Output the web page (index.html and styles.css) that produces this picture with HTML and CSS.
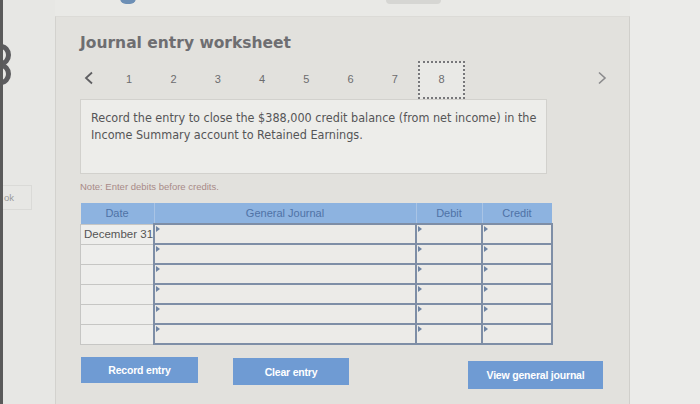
FILE: index.html
```html
<!DOCTYPE html>
<html>
<head>
<meta charset="utf-8">
<link rel="stylesheet" href="styles.css">
</head>
<body>
<div class="page">
  <div class="left">
    <div class="left-glyph"><span class="ring"></span><span class="ring"></span></div>
    <div class="left-box">ok</div>
  </div>
  <div class="center">
    <div class="topbar">
      <span class="dot"></span>
      <span class="pill"></span>
    </div>
    <div class="panel">
      <h1 class="title">Journal entry worksheet</h1>
      <div class="nav">
        <span class="chev prev"><svg width="10" height="14" viewBox="0 0 10 14"><polyline points="8,1.5 2,7 8,12.5" fill="none" stroke="#5f5f62" stroke-width="1.8"/></svg></span>
        <span class="step">1</span>
        <span class="step">2</span>
        <span class="step">3</span>
        <span class="step">4</span>
        <span class="step">5</span>
        <span class="step">6</span>
        <span class="step">7</span>
        <span class="step current">8</span>
        <span class="chev next"><svg width="10" height="14" viewBox="0 0 10 14"><polyline points="2,1.5 8,7 2,12.5" fill="none" stroke="#8a8a8c" stroke-width="1.6"/></svg></span>
      </div>
      <div class="prompt">Record the entry to close the $388,000 credit balance (from net income) in the Income Summary account to Retained Earnings.</div>
      <div class="note">Note: Enter debits before credits.</div>
      <table class="journal">
        <thead>
          <tr><th class="c-date">Date</th><th class="c-gj">General Journal</th><th class="c-dr">Debit</th><th class="c-cr">Credit</th></tr>
        </thead>
        <tbody>
          <tr><td class="date">December 31</td><td class="inp"><i class="tri"></i></td><td class="inp"><i class="tri"></i></td><td class="inp"><i class="tri"></i></td></tr>
          <tr><td class="date"></td><td class="inp"><i class="tri"></i></td><td class="inp"><i class="tri"></i></td><td class="inp"><i class="tri"></i></td></tr>
          <tr><td class="date"></td><td class="inp"><i class="tri"></i></td><td class="inp"><i class="tri"></i></td><td class="inp"><i class="tri"></i></td></tr>
          <tr><td class="date"></td><td class="inp"><i class="tri"></i></td><td class="inp"><i class="tri"></i></td><td class="inp"><i class="tri"></i></td></tr>
          <tr><td class="date"></td><td class="inp"><i class="tri"></i></td><td class="inp"><i class="tri"></i></td><td class="inp"><i class="tri"></i></td></tr>
          <tr><td class="date"></td><td class="inp"><i class="tri"></i></td><td class="inp"><i class="tri"></i></td><td class="inp"><i class="tri"></i></td></tr>
        </tbody>
      </table>
      <div class="actions">
        <button class="btn b-record">Record entry</button>
        <button class="btn b-clear">Clear entry</button>
        <button class="btn b-view">View general journal</button>
      </div>
    </div>
  </div>
  <div class="right"></div>
</div>
</body>
</html>
```

FILE: styles.css
```css
html, body {
  margin: 0;
  padding: 0;
  background: #e8e8e5;
}
.page {
  display: flex;
  width: 700px;
  height: 404px;
  overflow: hidden;
  font-family: "Liberation Sans", Arial, sans-serif;
}
.left {
  width: 52px;
  flex: none;
  background: #e7e7e4;
  border-left: 3px solid #5a5a5a;
  overflow: hidden;
  display: flex;
  flex-direction: column;
}
.left-glyph {
  margin-top: 44px;
  margin-left: -12px;
  display: flex;
  flex-direction: column;
}
.ring {
  width: 10px;
  height: 12px;
  border: 5px solid #5c5c5e;
  border-radius: 50%;
  margin-bottom: -3px;
}
.left-box {
  margin-top: 103px;
  width: 27px;
  height: 23px;
  border: 1px solid #dadad7;
  border-left: none;
  font-size: 9.5px;
  line-height: 23px;
  color: #9a9a9a;
  padding-left: 1px;
}
.center {
  width: 575px;
  flex: none;
  display: flex;
  flex-direction: column;
}
.topbar {
  height: 16px;
  flex: none;
  background: #e9e9e6;
  display: flex;
  align-items: flex-start;
}
.dot {
  width: 16px;
  height: 6px;
  margin-left: 65px;
  margin-top: -2px;
  border-radius: 0 0 8px 8px;
  background: #6d8fb5;
}
.pill {
  width: 55px;
  height: 4px;
  margin-left: 250px;
  border-radius: 0 0 6px 6px;
  background: #d6d6d3;
}
.panel {
  flex: 1;
  background: #e2e1dd;
  border-left: 1px solid #d3d2ce;
  border-right: 1px solid #d0cfcb;
  border-top: 1px solid #dcdbd7;
  padding-left: 24px;
  display: flex;
  flex-direction: column;
}
.title {
  margin: 16px 0 0 0;
  font-family: "DejaVu Sans", Verdana, sans-serif;
  font-weight: bold;
  font-size: 15.5px;
  line-height: 20px;
  color: #6e6e71;
}
.nav {
  margin-top: 8px;
  height: 38px;
  display: flex;
  align-items: center;
}
.chev {
  display: flex;
  align-items: center;
  margin-top: -4px;
}
.chev.prev {
  width: 27px;
  padding-left: 4px;
  box-sizing: border-box;
}
.chev.next {
  margin-left: 132px;
}
.step {
  width: 44.3px;
  text-align: center;
  font-size: 11px;
  color: #6c6c6e;
  margin-top: -2px;
}
.step.current {
  width: 43px;
  height: 34px;
  margin-left: 1px;
  margin-top: 0;
  line-height: 32px;
  border: 2px dotted #77777a;
  background: #e9e9e6;
}
.prompt {
  width: 452px;
  height: 55px;
  padding: 9px 3px 9px 10px;
  background: #ededea;
  border: 1px solid #d2d1cd;
  font-family: "DejaVu Sans Condensed", "DejaVu Sans", sans-serif;
  font-size: 12.5px;
  line-height: 17px;
  color: #555557;
}
.note {
  margin-top: 7px;
  font-size: 9.5px;
  line-height: 12px;
  color: #a88a88;
}
.journal {
  margin-top: 10px;
  width: 468px;
  border-collapse: collapse;
  table-layout: fixed;
}
.journal th {
  height: 20px;
  padding: 0;
  background: #8db3e0;
  border-left: 1px solid #a9c4e5;
  font-size: 11px;
  font-weight: normal;
  color: #4f72a6;
  text-align: center;
}
.journal th.c-date { width: 73px; border-left: none; }
.journal th.c-gj { width: 261px; }
.journal th.c-dr { width: 65px; }
.journal th.c-cr { width: 69px; }
.journal td {
  height: 18px;
  padding: 0;
  position: relative;
}
.journal td.date {
  border: 1px solid #c6c6c4;
  background: #eeeeec;
  font-size: 11.5px;
  color: #555;
  padding-left: 3px;
  white-space: nowrap;
  overflow: hidden;
}
.journal td.inp {
  border: 2px solid #7e8ea6;
  background: #ecebe8;
}
.tri {
  position: absolute;
  left: 1px;
  top: 1px;
  width: 0;
  height: 0;
  border-top: 3px solid transparent;
  border-bottom: 3px solid transparent;
  border-left: 4px solid #6e84a3;
}
.actions {
  display: flex;
  align-items: flex-start;
  margin-top: 12px;
}
.btn {
  border: none;
  background: #6f9bd3;
  color: #ffffff;
  font-family: "Liberation Sans", Arial, sans-serif;
  font-weight: bold;
  font-size: 10.5px;
  letter-spacing: -0.2px;
  padding: 0;
}
.b-record {
  width: 117px;
  height: 26px;
  margin-left: 1px;
}
.b-clear {
  width: 116px;
  height: 27px;
  margin-left: 35px;
  margin-top: 1px;
}
.b-view {
  width: 135px;
  height: 28px;
  margin-left: 119px;
  margin-top: 4px;
}
.right {
  flex: 1;
  background: #ebebe9;
}
```
